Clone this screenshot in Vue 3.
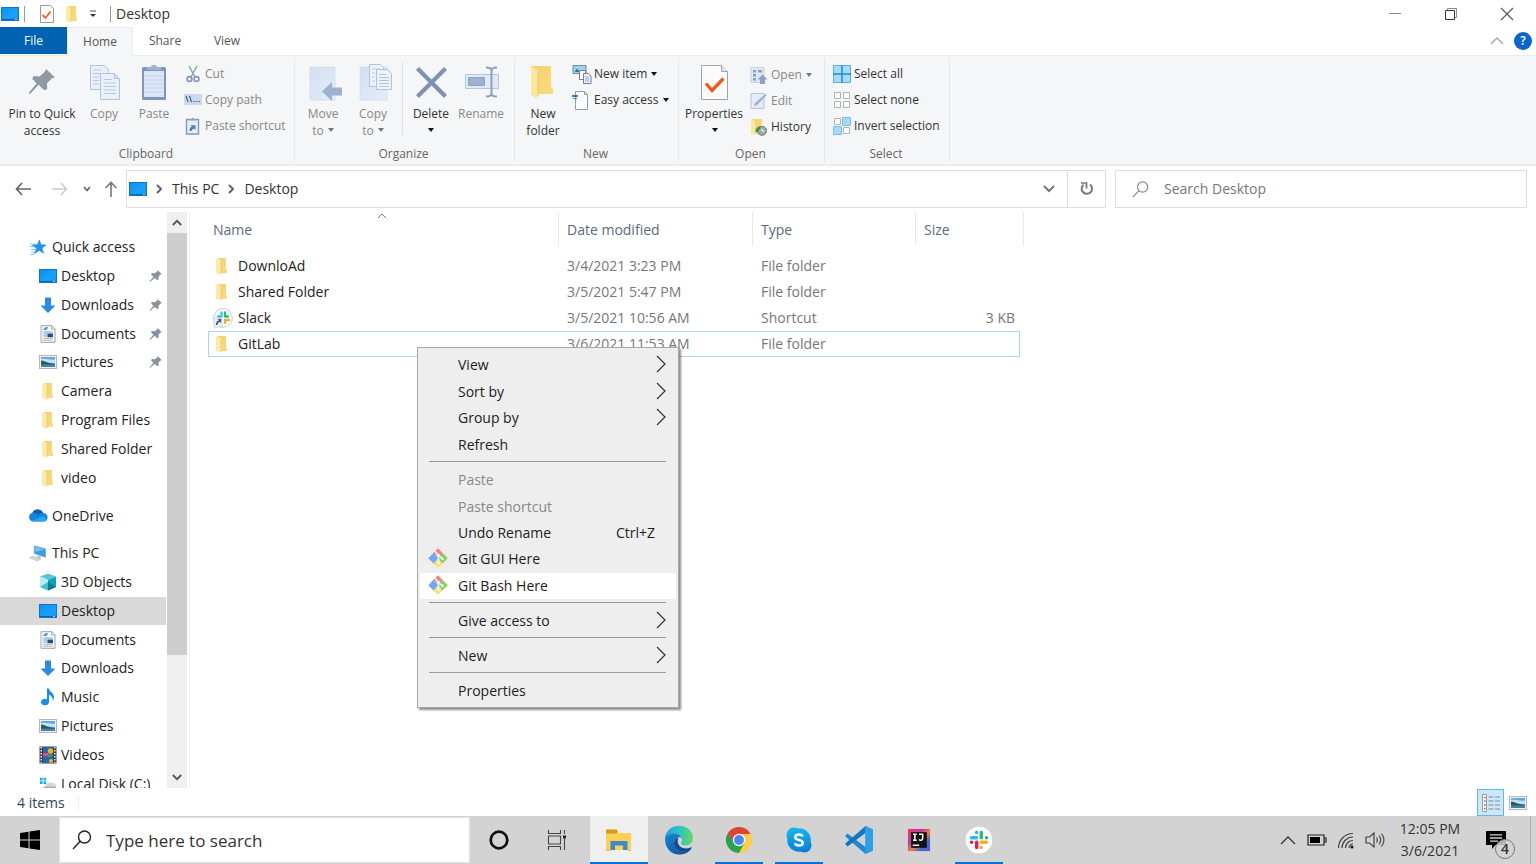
<script setup>
const tabs = ['Home', 'Share', 'View']

const quick = [
  { t: 'Desktop', i: 'desktop', pin: true },
  { t: 'Downloads', i: 'download', pin: true },
  { t: 'Documents', i: 'document', pin: true },
  { t: 'Pictures', i: 'picture', pin: true },
  { t: 'Camera', i: 'folder' },
  { t: 'Program Files', i: 'folder' },
  { t: 'Shared Folder', i: 'folder' },
  { t: 'video', i: 'folder' }
]
const pc = [
  { t: '3D Objects', i: 'cube' },
  { t: 'Desktop', i: 'desktop', on: true },
  { t: 'Documents', i: 'document' },
  { t: 'Downloads', i: 'download' },
  { t: 'Music', i: 'music' },
  { t: 'Pictures', i: 'picture' },
  { t: 'Videos', i: 'video' },
  { t: 'Local Disk (C:)', i: 'disk' }
]
const tree = [
  { root: { t: 'Quick access', i: 'star' }, items: quick },
  { root: { t: 'OneDrive', i: 'cloud' }, items: [] },
  { root: { t: 'This PC', i: 'pc' }, items: pc }
]
const files = [
  { n: 'DownloAd', i: 'folder', d: '3/4/2021 3:23 PM', t: 'File folder', s: '' },
  { n: 'Shared Folder', i: 'folder', d: '3/5/2021 5:47 PM', t: 'File folder', s: '' },
  { n: 'Slack', i: 'slacklink', d: '3/5/2021 10:56 AM', t: 'Shortcut', s: '3 KB' },
  { n: 'GitLab', i: 'folder', d: '3/6/2021 11:53 AM', t: 'File folder', s: '', on: true }
]
const menu = [
  [{ t: 'View', sub: true }, { t: 'Sort by', sub: true }, { t: 'Group by', sub: true }, { t: 'Refresh' }],
  [
    { t: 'Paste', off: true },
    { t: 'Paste shortcut', off: true },
    { t: 'Undo Rename', key: 'Ctrl+Z' },
    { t: 'Git GUI Here', git: true },
    { t: 'Git Bash Here', git: true, on: true }
  ],
  [{ t: 'Give access to', sub: true }],
  [{ t: 'New', sub: true }],
  [{ t: 'Properties' }]
]
const apps = [
  { i: 'explorer', t: 'File Explorer', state: 'active' },
  { i: 'edge', t: 'Microsoft Edge', state: '' },
  { i: 'chrome', t: 'Google Chrome', state: 'running' },
  { i: 'skype', t: 'Skype', state: 'running' },
  { i: 'vscode', t: 'Visual Studio Code', state: '' },
  { i: 'intellij', t: 'IntelliJ IDEA', state: '' },
  { i: 'slackapp', t: 'Slack', state: 'running' }
]
</script>

<template>
  <div class="screen">
    <svg class="sprite" aria-hidden="true">
      <defs>
        <linearGradient id="gBlue" x1="0" y1="0" x2="1" y2="1"><stop offset="0" stop-color="#0a8ff0" /><stop offset=".6" stop-color="#1ba1fb" /><stop offset="1" stop-color="#1693ee" /></linearGradient>
        <linearGradient id="gFold" x1="0" y1="0" x2="1" y2="1"><stop offset="0" stop-color="#f3d06f" /><stop offset="1" stop-color="#fbdc7c" /></linearGradient>
        <linearGradient id="gPale" x1="0" y1="0" x2="1" y2="1"><stop offset="0" stop-color="#d3e0f2" /><stop offset="1" stop-color="#e3ecf8" /></linearGradient>
        <linearGradient id="gEdge1" x1="0" y1="0" x2="1" y2="0"><stop offset="0" stop-color="#1b9de2" /><stop offset=".5" stop-color="#2fc2c9" /><stop offset="1" stop-color="#5fdc5a" /></linearGradient>
        <linearGradient id="gEdge2" x1="0" y1="0" x2="1" y2="1"><stop offset="0" stop-color="#1488d8" /><stop offset="1" stop-color="#0f4a93" /></linearGradient>
        <linearGradient id="gSkype" x1="0" y1="0" x2="0" y2="1"><stop offset="0" stop-color="#12b5f0" /><stop offset="1" stop-color="#0b80d8" /></linearGradient>
        <linearGradient id="gIj" x1="0" y1="0" x2="1" y2="1"><stop offset="0" stop-color="#fe315d" /><stop offset=".35" stop-color="#b4449a" /><stop offset=".55" stop-color="#f97a3c" /><stop offset=".75" stop-color="#3a6bd8" /><stop offset="1" stop-color="#6b57c8" /></linearGradient>
      </defs>
      <symbol id="desktop" viewBox="0 0 18 14"><rect x=".5" y=".5" width="17" height="13" fill="url(#gBlue)" stroke="#0d76c9" /><path d="M1 12.5h16" stroke="#0b66b4" /><path d="M14 12.5h2" stroke="#9fd4fa" /></symbol>
      <symbol id="folder" viewBox="0 0 18 18"><path d="M5 1h8v11l1 1v3H5z" fill="url(#gFold)" /><path d="M3 1.5l5 1.2V17l-1 .8L3 16z" fill="#fde9a9" /><path d="M8 3v14" stroke="#e9c661" stroke-width=".6" /></symbol>
      <symbol id="download" viewBox="0 0 18 18"><path d="M6 1.500h6v8h4.500L9 17 1.500 9.500H6z" fill="#2b8be0" /></symbol>
      <symbol id="document" viewBox="0 0 18 18"><path d="M2 .7h11l3 3v13.600H2z" fill="#f8fafb" stroke="#8e979d" stroke-width=".9" /><path d="M2 .7h1.500v16.600H2z" fill="#d3d8dc" /><path d="M12.500.7v3.500H16" fill="#dfe4e8" stroke="#8e979d" stroke-width=".6" /><path d="M4.500 4.500l2-2h2l-1 2zM4.500 7h9M4.500 9h4M4.500 11h4" fill="#3e97dc" stroke="#4e9bd8" stroke-width=".9" /><path d="M4.500 13.300h9M4.500 15.200h9" stroke="#98a0a6" stroke-width=".8" /><rect x="8.500" y="8.500" width="5.500" height="3.700" fill="#204f7d" /></symbol>
      <symbol id="picture" viewBox="0 0 18 14"><rect x=".5" y=".5" width="17" height="13" fill="#f3f3f3" stroke="#b3b7ba" /><rect x="2" y="2" width="14" height="10" fill="#5fa8e6" /><path d="M2 4c5-1 9 1.500 14 .5V8H2z" fill="#c6e1f7" /><path d="M2 5.500c3 0 6 2.500 14 3.500v1.500H2z" fill="#2d5c4f" /><path d="M2 9.500h14V12H2z" fill="#3c84b8" /></symbol>
      <symbol id="star" viewBox="0 0 18 18"><path d="M10.500 1l1.600 5.200 5.400.2-4.300 3.300 1.500 5.300-4.500-3-4.700 3.400 1.800-5.600L3 6.300l5.400-.2z" fill="#1e95ea" stroke="#1e95ea" stroke-width=".8" /><path d="M1 5.500h5M.5 8h5M2 14h4M1 16.500h4M2 11h4" stroke="#6dbcf3" stroke-width="1" /></symbol>
      <symbol id="cloud" viewBox="0 0 20 14"><path d="M5 13a4.500 4.500 0 0 1-.6-8.800A6 6 0 0 1 15 4.400 4.300 4.300 0 0 1 15.500 13z" fill="#1384dc" /><path d="M4.400 4.200A6 6 0 0 1 15 4.400c-2 0-3.500.9-4.500 2.200C9 5 7 4 4.400 4.200z" fill="#0a5fb4" /><path d="M3.500 12.500l12-5 3.500 4c-.8 1-2 1.500-3.500 1.500H5z" fill="#28a3ee" /></symbol>
      <symbol id="pc" viewBox="0 0 20 18"><path d="M6 1l12 3v9L6 9z" fill="#2f9ff0" stroke="#8ea2b0" stroke-width=".8" /><path d="M7 2l10 2.500-10 3z" fill="#74c4f8" /><path d="M9 11l4 1.500v2L9 13z" fill="#b4bcc2" /><path d="M1 13.500l4-1.500 8 3-4 1.800z" fill="#d4d9dd" stroke="#a6adb2" stroke-width=".6" /></symbol>
      <symbol id="cube" viewBox="0 0 18 18"><path d="M9 .5l8 3L9 7 1 3.500z" fill="#52c9d9" /><path d="M1 3.500L9 7v10.500L1 14z" fill="#b2edf1" /><path d="M17 3.500L9 7v10.500l8-3.500z" fill="#0fa3bb" /><path d="M1 14l8-5v8.500z" fill="#3bc3cf" /><path d="M17 14L9 9v8.500z" fill="#087c96" /></symbol>
      <symbol id="music" viewBox="0 0 18 18"><path d="M8 .5h2c.5 3.500 5 4.500 5 8.500 0 1.500-.5 2.800-1.300 4 .3-3-.7-5-3.700-6.200V14a4 3.300 0 1 1-2-2.800z" fill="#168fe8" /></symbol>
      <symbol id="video" viewBox="0 0 18 18"><rect x=".5" y=".5" width="17" height="17" fill="#3f4246" /><rect x="4" y="1" width="10" height="16" fill="#2a62b9" /><path d="M2.200 1v16M15.800 1v16" stroke="#e5e5e5" stroke-width="1.500" stroke-dasharray="1.500 1.500" /><circle cx="11.500" cy="5" r="2.700" fill="#e9b51c" /><path d="M4 7h5v3H4z" fill="#db4e86" /><path d="M9 8h4v3H9z" fill="#3d9a45" /><circle cx="12" cy="15" r="2" fill="#efb91a" /></symbol>
      <symbol id="disk" viewBox="0 0 18 18"><path d="M0 2h3v3H0zM4 2h3v3H4zM0 6h3v3H0zM4 6h3v3H4z" fill="#1cace8" /><path d="M6 9.500l3-2h6l3 3v3H6z" fill="#d4d7da" /><path d="M4 12h14v4H4z" fill="#a3a8ac" /></symbol>
      <symbol id="pin" viewBox="0 0 14 14"><path d="M8.500 1l4.500 4.300-1.600.3-1.900 2.200.1 2.700-1.400.7-2.500-2.500L1 13l-.5-.6 3.800-4.700L2 5.300l.9-1.200 2.800.2L8.200 2.500z" fill="#87929b" /></symbol>
      <symbol id="slacklink" viewBox="0 0 20 20"><circle cx="10" cy="10" r="9.300" fill="#fff" stroke="#c3c7ca" /><g stroke-width="2.300" stroke-linecap="round"><path d="M8.500 4.500v4M5 8.500h3" stroke="#36c5f0" /><path d="M12 4.500v4M15 8.500h-2" stroke="#2eb67d" /><path d="M12 12h4M12 12v3" stroke="#ecb22e" /></g><path d="M1 10h8v9H1z" fill="#f2f2f2" stroke="#b9bcbe" stroke-width=".6" /><path d="M3 17c0-3 1-4 3-4.500l-1.300-1.400H8.200V15L7 13.800C5.400 14.300 4.500 15 4.500 17z" fill="#1b569b" /></symbol>
      <symbol id="git" viewBox="0 0 20 20"><path d="M5.500 4.800L10 9.300v2L5.500 15.500.3 10.200z" fill="#73a6f8" /><path d="M10 .3l4.700 4.600L11 8.500 5.300 5z" fill="#f77f7f" /><path d="M14.700 4.900l5 5.300-5.200 5.300L10 11V8.500z" fill="#86d05c" /><path d="M10 10l4.500 5.500L10 19.800l-4.500-4.300z" fill="#fbdc74" /><path d="M6.500 3l4 4v8M10.800 7.500l3.600 3.200" stroke="#f3f3f3" stroke-width="1.500" fill="none" /><circle cx="10.500" cy="7.300" r="1.500" fill="#f3f3f3" /><circle cx="10.500" cy="14.800" r="1.500" fill="#f3f3f3" /><circle cx="14.400" cy="10.700" r="1.500" fill="#f3f3f3" /></symbol>

      <symbol id="bigpin" viewBox="0 0 40 40"><path d="M24 7l9 8.500-3 .8-5 5 .2 5.700-3 1.200-5.500-5.400L8 32l-1.300-1.200 8-9.300-4.500-4.800 1.500-2.700 5.800.4 5-4.400z" fill="#8f9aa3" /></symbol>
      <symbol id="copy" viewBox="0 0 40 40"><g fill="#e9f0fa" stroke="#b3c3dc"><path d="M6.500 3.500h14l4 4.500v19.500h-18z" /><path d="M16.500 11.500h14l5 5v21h-19z" /><path d="M30.500 11.500v5h5" fill="#d3dfef" /></g><path d="M9 8h9M9 11.500h12M9 15h6M9 18.500h6M9 22h6M20 17.500h8M20 21h12M20 24.500h12M20 28h12M20 31.500h12" stroke="#b9c8de" stroke-width="1.200" /></symbol>
      <symbol id="paste" viewBox="0 0 40 40"><rect x="8" y="5" width="24" height="33" rx="1.500" fill="#8095ba" /><path d="M10 9h20v26H10z" fill="#dbe6f5" /><path d="M13 8V5h4c0-3 6-3 6 0h4v3z" fill="#a5b4cc" /><path d="M10 14h20M10 18h20M10 22h20M10 26h20M10 30h20" stroke="#c5d5ec" /></symbol>
      <symbol id="cut" viewBox="0 0 18 18"><path d="M5 1l6 11M13 1L7 12" stroke="#93a0b4" stroke-width="1.500" /><circle cx="5.500" cy="14" r="2.400" fill="none" stroke="#8797b4" stroke-width="1.700" /><circle cx="12.500" cy="14" r="2.400" fill="none" stroke="#8797b4" stroke-width="1.700" /></symbol>
      <symbol id="path" viewBox="0 0 18 18"><rect y="3" width="18" height="11" fill="#ccd9ed" /><path d="M2 5l2 6M5.500 5l2 6" stroke="#45536d" stroke-width="1.100" /><path d="M9 10.500h7.500" stroke="#56637a" stroke-dasharray="1.500 1.200" stroke-width="1.200" /></symbol>
      <symbol id="shortcut" viewBox="0 0 18 18"><path d="M2.500 2.500h12v14.500h-12z" fill="#e6eefa" stroke="#8297bb" stroke-width="1.400" /><path d="M5.500 3.500V2h2c0-1.700 2.500-1.700 2.500 0h2v1.500z" fill="#93a4c2" /><path d="M5.500 14c0-3 .9-3.900 2.200-4.300L6.500 8.300h5v4.600l-1.200-1.200c-1.700.3-2.500 1-2.500 2.300z" fill="#6079a8" /></symbol>
      <symbol id="moveto" viewBox="0 0 40 40"><path d="M7 5h25v33H7z" fill="url(#gPale)" stroke="#c9d8ec" stroke-width=".6" /><path d="M19 29.500l10-9.500v5.500h10v8H29V39z" fill="#9fb1ce" /></symbol>
      <symbol id="copyto" viewBox="0 0 40 40"><path d="M7 5h27v33H7z" fill="url(#gPale)" stroke="#c9d8ec" stroke-width=".6" /><g fill="#ecf2fa" stroke="#b0c1da"><path d="M16.500 2.500h11l3 3v19h-14z" /><path d="M23.500 7.500h11l4 4v16h-15z" /></g><path d="M26 12.500h7M26 15.500h10M26 18.500h10M26 21.500h10M26 24.500h10M19 7h7M19 11h3M19 15h3M19 19h3" stroke="#b6c5dc" stroke-width="1.100" /></symbol>
      <symbol id="delete" viewBox="0 0 40 40"><path d="M6.500 6.500l28 28M34.500 6.500l-28 28" stroke="#7f91b2" stroke-width="4.200" /></symbol>
      <symbol id="rename" viewBox="0 0 40 40"><path d="M4.500 12.500h33v14h-33z" fill="#e0eaf7" stroke="#b6c6de" /><path d="M7.500 15.500h16v8h-16z" fill="#9fb1ce" stroke="#8ea2c3" /><path d="M25 5.500c4 0 5.500 1 5.500 3 0-2 1.500-3 5.500-3M30.500 8v24M25 34.500c4 0 5.500-1 5.500-3 0 2 1.500 3 5.500 3" stroke="#8b9fc1" stroke-width="2" fill="none" /></symbol>
      <symbol id="bigfolder" viewBox="0 0 40 40"><path d="M8 4h20v21l2 2v5H8z" fill="url(#gFold)" /><path d="M8 4.500l7 4V34l-2 2.500-5-4z" fill="#fde7a0" /><path d="M15 9v25" stroke="#eac55c" stroke-width=".8" /></symbol>
      <symbol id="newitem" viewBox="0 0 20 20"><path d="M1 1.500h13v8H1z" fill="#9ad3f3" stroke="#5f7480" stroke-width=".8" /><path d="M3 8c1-4 3-4 4 0z" fill="#2b6e78" /><path d="M7.500 6.500h6v9h-6z" fill="#fff" stroke="#75828c" /><path d="M11.500 9.500h5l2.500 2.500v7.500h-7.500z" fill="#eef1fb" stroke="#75828c" /><path d="M13 13h4M13 15h4M13 17h4" stroke="#8fa7e0" /></symbol>
      <symbol id="easy" viewBox="0 0 20 20"><path d="M3.500 1.500h9l3 3v15h-12z" fill="#fafafa" stroke="#989c9f" /><path d="M12.500 1.500v3h3" fill="none" stroke="#989c9f" /><path d="M0 6h6" stroke="#1f5fa9" stroke-width="1.600" /><path d="M1 8.500h4" stroke="#4a86c8" /></symbol>
      <symbol id="props" viewBox="0 0 40 40"><path d="M7.500 3.500h20l6 6v28h-26z" fill="#fbfbfb" stroke="#a0a3a5" /><path d="M27.500 3.500v6h6" fill="#e5e7e8" stroke="#a0a3a5" /><path d="M12 21.500l6 7 11.500-12" stroke="#f25a1d" stroke-width="3.300" fill="none" /></symbol>
      <symbol id="open" viewBox="0 0 18 18"><path d="M1 1.500h13v15H1z" fill="#dde7f5" stroke="#bccbe1" stroke-width=".8" /><path d="M3 4h3v2.500H3zM3 8h3v2.500H3zM3 12h3v2.500H3zM8 4h4v2.500H8z" fill="#8b9fc1" /><path d="M12.500 8.500L17.500 13.500H15V18h-5v-4.500H7.500z" fill="#8da1c4" /></symbol>
      <symbol id="edit" viewBox="0 0 18 18"><path d="M1 1.500h13v15H1z" fill="#e4ecf8" stroke="#b4c4dd" /><path d="M4 14l1-3L15.500 2l1.200 1.200L7 13z" fill="#9db0d0" /></symbol>
      <symbol id="history" viewBox="0 0 18 18"><path d="M1 1h11v15H1z" fill="url(#gFold)" /><path d="M1 1l4 2v14.500L1 15z" fill="#fde7a0" /><circle cx="12" cy="12.800" r="4.500" fill="#a2a7aa" stroke="#72787b" /><path d="M12 10.500v2.500h2.500" stroke="#fff" fill="none" /><path d="M5.500 14c0-3.500 2-5.500 5-5.500v2.500c-1.500 0-2.300 1-2.300 3z" fill="#2a9b35" /></symbol>
      <symbol id="selall" viewBox="0 0 18 18"><path d="M.5.500h17v17H.5z" fill="#a5dafc" stroke="#5dade0" /><path d="M9 0v18M0 9h18" stroke="#1f87cd" stroke-width="1.400" /></symbol>
      <symbol id="selnone" viewBox="0 0 18 18"><path d="M1.500 1.500h6v6h-6zM10.500 1.500h6v6h-6zM1.500 10.500h6v6h-6zM10.500 10.500h6v6h-6z" fill="#fdfdfd" stroke="#b0b2b4" /></symbol>
      <symbol id="selinv" viewBox="0 0 18 18"><path d="M1.500 1.500h6v6h-6zM10.500 10.500h6v6h-6z" fill="#fdfdfd" stroke="#b0b2b4" /><path d="M9.500.500h8v8h-8zM.5 9.500h8v8h-8z" fill="#a5dafc" stroke="#78bdec" /></symbol>
      <symbol id="check" viewBox="0 0 16 18"><path d="M1.500.5h10l3 3v14h-13z" fill="#fbfbfb" stroke="#96999b" /><path d="M3.500 10l3 3 5-6.500" fill="none" stroke="#f0602a" stroke-width="1.800" /></symbol>
      <symbol id="lens" viewBox="0 0 20 20"><circle cx="12.500" cy="7" r="6" fill="none" stroke="currentColor" stroke-width="1.400" /><path d="M8.200 11.300L1 19" stroke="currentColor" stroke-width="1.400" /></symbol>

      <symbol id="explorer" viewBox="0 0 28 28"><path d="M1 4.500h10l2 2.500h13v17H1z" fill="#fbd154" /><path d="M1 3.500h10.500l1.500 2-1.500 2H1z" fill="#d99a12" /><path d="M5.500 15h17v9H18v-4.500h-8V24H5.500z" fill="#3a8bd0" /><path d="M1 24h4.500v1H1zM22.500 24H26v1h-3.500z" fill="#f0bd3c" /></symbol>
      <symbol id="edge" viewBox="0 0 30 30"><path d="M1 13C2 5.500 8 .8 15 .8c8 0 14 5.400 14 12 0 4.500-3.300 7.700-7.500 7.700-3 0-4.500-1.200-4.500-2.300 0-.8 1-1.400 1-3.200 0-3.500-3.500-6-7.500-6C6 9 2.500 11 1 13z" fill="url(#gEdge1)" /><path d="M1 13c1.500-2.500 5-4.300 9-4.300 3.500 0 6.500 1.600 7.500 4-3.500-1.500-7.500 1-7.500 5.500 0 4.800 4 8.300 9.500 8.300 3 0 5.500-1 7.300-2C24.500 27.500 20 29.500 15 29.500 7 29.500.5 23 1 13z" fill="url(#gEdge2)" /><path d="M10 18.200c0-3 1.500-5 4.500-5.800-1.500 3-1 7 2 9.300 2.800 2.200 7.500 2.300 11.500.3-.5 1-.8 1.800-1.200 2.500-6.800 5-16.800 1.500-16.800-6.300z" fill="#114a8f" /></symbol>
      <symbol id="chrome" viewBox="0 0 28 28"><circle cx="14" cy="14" r="13" fill="#ffcd40" /><path d="M14 14L2.700 7.500A13 13 0 0 0 14 27l5.500-10z" fill="#2ba24c" /><path d="M2.700 7.500A13 13 0 0 1 25.500 8H14l-5.500 8z" fill="#dc4437" /><circle cx="14" cy="14" r="6.200" fill="#f5f5f5" /><circle cx="14" cy="14" r="4.900" fill="#4a86f5" /></symbol>
      <symbol id="skype" viewBox="0 0 28 28"><circle cx="9" cy="9" r="7.500" fill="#18b0ea" /><circle cx="19.500" cy="19.500" r="7" fill="#0b80d8" /><circle cx="14" cy="14" r="11.800" fill="url(#gSkype)" /><path d="M17.800 10.400c-.8-1.300-2.200-1.900-3.900-1.900-2 0-3.700 1-3.700 2.800 0 3.700 7.600 1.600 7.600 5.400 0 1.800-1.700 2.800-3.800 2.800-2 0-3.500-.7-4.200-2.200" fill="none" stroke="#fff" stroke-width="2.500" /></symbol>
      <symbol id="vscode" viewBox="0 0 30 30"><path d="M21.500 1L29 4.500v21L21.500 29 1 11.200 3.500 8.500l18 13.500z" fill="#1e8ad2" /><path d="M21.500 1L1 18.800l2.500 2.700 18-13.500z" fill="#1576bd" /><path d="M21.500 1L29 4.500v21L21.500 29z" fill="#2aa0ea" /></symbol>
      <symbol id="intellij" viewBox="0 0 26 26"><path d="M1 1h24v24H1z" fill="url(#gIj)" /><path d="M4.500 4.500h17v17h-17z" fill="#121212" /><path d="M6.500 6.700h4M8.500 6.700v6.600M6.500 13.300h4M13 6.700h4v4.800c0 2-2.600 2.200-4 1" fill="none" stroke="#fff" stroke-width="1.600" /><path d="M6.200 18.700h7" stroke="#fff" stroke-width="1.500" /></symbol>
      <symbol id="slackapp" viewBox="0 0 28 28"><circle cx="14" cy="14" r="13.300" fill="#fff" /><g stroke-width="3.500" stroke-linecap="round"><path d="M11.700 6.300v.1M6.500 11.700h5.200" stroke="#2ebde8" /><path d="M16.300 6.500v5.200M21.500 11.700h.1" stroke="#2eb67d" /><path d="M16.300 16.300h5.200M16.300 21.500v.1" stroke="#ecb22e" /><path d="M11.700 16.300v5.200M6.500 16.300h.1" stroke="#e01e5a" /></g></symbol>
    </svg>

    <header class="titlebar">
      <svg class="desk"><use href="#desktop" /></svg>
      <span class="bar first"></span>
      <button class="qa" aria-label="Properties"><svg class="chk"><use href="#check" /></svg></button>
      <button class="qa" aria-label="New folder"><svg class="ic18"><use href="#folder" /></svg></button>
      <button class="custom" aria-label="Customize toolbar"><svg viewBox="0 0 8 8" width="8" height="8"><path d="M1 1h6" stroke="#555" /><path d="M1 4h6L4 7z" fill="#333" /></svg></button>
      <span class="bar"></span>
      <h1>Desktop</h1>
      <div class="winctl">
        <button aria-label="Minimize"><svg viewBox="0 0 14 14" width="14" height="14"><path d="M1 6.500h12" stroke="#888" /></svg></button>
        <button aria-label="Restore"><svg viewBox="0 0 14 14" width="14" height="14"><path d="M3.500 3V1.500h9v9H10.500" fill="none" stroke="#888" /><path d="M1.500 3.500h9v9h-9z" fill="none" stroke="#333" /></svg></button>
        <button aria-label="Close"><svg viewBox="0 0 14 14" width="14" height="14"><path d="M1 1l12 12M13 1L1 13" stroke="#555" stroke-width="1.100" /></svg></button>
      </div>
    </header>

    <nav class="tabs">
      <button class="file">File</button>
      <button v-for="(t, k) in tabs" :key="t" :class="{ current: k === 0 }">{{ t }}</button>
      <div class="help">
        <button aria-label="Collapse ribbon"><svg viewBox="0 0 14 10" width="14" height="10"><path d="M1 8l6-6 6 6" fill="none" stroke="#aaa" stroke-width="1.500" /></svg></button>
        <button class="q" aria-label="Help">?</button>
      </div>
    </nav>

    <section class="ribbon">
      <div class="group clipboard">
        <div class="tools">
          <button class="big wide"><svg><use href="#bigpin" /></svg><span>Pin to Quick access</span></button>
          <button class="big off"><svg><use href="#copy" /></svg><span>Copy</span></button>
          <button class="big off"><svg><use href="#paste" /></svg><span>Paste</span></button>
          <div class="stack">
            <button class="off"><svg><use href="#cut" /></svg>Cut</button>
            <button class="off"><svg><use href="#path" /></svg>Copy path</button>
            <button class="off"><svg><use href="#shortcut" /></svg>Paste shortcut</button>
          </div>
        </div>
        <h2>Clipboard</h2>
      </div>
      <div class="group organize">
        <div class="tools">
          <button class="big off"><svg><use href="#moveto" /></svg><span>Move<br />to <i class="tri"></i></span></button>
          <button class="big off"><svg><use href="#copyto" /></svg><span>Copy<br />to <i class="tri"></i></span></button>
          <span class="rule"></span>
          <button class="big"><svg><use href="#delete" /></svg><span>Delete<br /><i class="tri"></i></span></button>
          <button class="big off"><svg><use href="#rename" /></svg><span>Rename</span></button>
        </div>
        <h2>Organize</h2>
      </div>
      <div class="group new">
        <div class="tools">
          <button class="big"><svg><use href="#bigfolder" /></svg><span>New folder</span></button>
          <div class="stack">
            <button><svg><use href="#newitem" /></svg>New item<i class="tri"></i></button>
            <button><svg><use href="#easy" /></svg>Easy access<i class="tri"></i></button>
          </div>
        </div>
        <h2>New</h2>
      </div>
      <div class="group opens">
        <div class="tools">
          <button class="big mid"><svg><use href="#props" /></svg><span>Properties<br /><i class="tri"></i></span></button>
          <div class="stack">
            <button class="off"><svg><use href="#open" /></svg>Open<i class="tri"></i></button>
            <button class="off"><svg><use href="#edit" /></svg>Edit</button>
            <button><svg><use href="#history" /></svg>History</button>
          </div>
        </div>
        <h2>Open</h2>
      </div>
      <div class="group select">
        <div class="tools">
          <div class="stack">
            <button><svg><use href="#selall" /></svg>Select all</button>
            <button><svg><use href="#selnone" /></svg>Select none</button>
            <button><svg><use href="#selinv" /></svg>Invert selection</button>
          </div>
        </div>
        <h2>Select</h2>
      </div>
    </section>

    <div class="navbar">
      <div class="arrows">
        <button class="a1" aria-label="Back"><svg viewBox="0 0 16 14" width="16" height="14"><path d="M7 1L1.500 7 7 13M1.500 7H16" fill="none" stroke="#666" stroke-width="1.700" /></svg></button>
        <button class="a2" aria-label="Forward"><svg viewBox="0 0 16 14" width="16" height="14"><path d="M9 1l5.500 6L9 13M14.500 7H0" fill="none" stroke="#ccc" stroke-width="1.500" /></svg></button>
        <button class="a3" aria-label="Recent locations"><svg viewBox="0 0 8 6" width="8" height="6"><path d="M1 1l3 3.500L7 1" fill="none" stroke="#666" stroke-width="1.600" /></svg></button>
        <button class="a4" aria-label="Up"><svg viewBox="0 0 14 16" width="14" height="16"><path d="M1.500 7L7 1.500 12.500 7M7 1.500V16" fill="none" stroke="#777" stroke-width="1.600" /></svg></button>
      </div>
      <div class="address">
        <svg class="desk"><use href="#desktop" /></svg>
        <svg class="crumb" viewBox="0 0 6 10"><path d="M1 1l4 4-4 4" /></svg>
        <a href="#pc">This PC</a>
        <svg class="crumb" viewBox="0 0 6 10"><path d="M1 1l4 4-4 4" /></svg>
        <a href="#desktop-folder">Desktop</a>
        <button class="drop" aria-label="Previous locations"><svg viewBox="0 0 12 8" width="12" height="8"><path d="M1 1l5 5 5-5" fill="none" stroke="#777" stroke-width="2" /></svg></button>
        <button class="reload" aria-label="Refresh"><svg viewBox="0 0 16 16" width="16" height="16"><path d="M11 3.500a5.200 5.200 0 1 1-6.500.2" fill="none" stroke="#777" stroke-width="2" /><path d="M2 2h5.500v5.500" fill="none" stroke="#777" stroke-width="1.700" /></svg></button>
      </div>
      <label class="find">
        <svg><use href="#lens" /></svg>
        <input type="search" placeholder="Search Desktop" aria-label="Search Desktop" />
      </label>
    </div>

    <main>
      <nav class="tree" aria-label="Folders">
        <ul v-for="g in tree" :key="g.root.t" :class="{ full: g.items.length }">
          <li><a class="root" href="#"><svg><use :href="'#' + g.root.i" /></svg>{{ g.root.t }}</a></li>
          <li v-for="n in g.items" :key="n.t" :class="{ on: n.on }">
            <a href="#"><svg :class="n.i"><use :href="'#' + n.i" /></svg>{{ n.t }}<svg v-if="n.pin" class="pin"><use href="#pin" /></svg></a>
          </li>
        </ul>
      </nav>
      <div class="scroll">
        <button aria-label="Scroll up"><svg viewBox="0 0 12 8" width="10" height="7"><path d="M1 7l5-5 5 5" fill="none" stroke="#555" stroke-width="2.200" /></svg></button>
        <div class="track"><div class="thumb"></div></div>
        <button aria-label="Scroll down"><svg viewBox="0 0 12 8" width="10" height="7"><path d="M1 1l5 5 5-5" fill="none" stroke="#555" stroke-width="2.200" /></svg></button>
      </div>
      <div class="pane">
        <table>
          <colgroup><col class="c1" /><col class="c2" /><col class="c3" /><col class="c4" /></colgroup>
          <thead>
            <tr>
              <th><svg class="sort" viewBox="0 0 10 6"><path d="M1 5l4-4 4 4" fill="none" stroke="#777" /></svg>Name</th>
              <th>Date modified</th><th>Type</th><th>Size</th>
            </tr>
          </thead>
          <tbody>
            <tr v-for="f in files" :key="f.n" :class="{ on: f.on }">
              <td><span class="name"><svg :class="f.i"><use :href="'#' + f.i" /></svg>{{ f.n }}</span></td>
              <td>{{ f.d }}</td><td>{{ f.t }}</td><td>{{ f.s }}</td>
            </tr>
          </tbody>
        </table>
        <div class="menu" role="menu">
          <div v-for="(g, k) in menu" :key="k" class="mg" :class="'n' + g.length">
            <button v-for="m in g" :key="m.t" role="menuitem" :class="{ on: m.on, off: m.off }">
              <svg v-if="m.git" class="git"><use href="#git" /></svg>
              <span>{{ m.t }}</span>
              <kbd v-if="m.key">{{ m.key }}</kbd>
              <svg v-if="m.sub" class="sub" viewBox="0 0 10 18"><path d="M1 1l8 8-8 8" fill="none" stroke="#333" stroke-width="1.200" /></svg>
            </button>
          </div>
        </div>
      </div>
    </main>

    <footer class="status">
      <span>4 items</span><i></i>
      <div class="views">
        <button class="sel" aria-label="Details view"><svg viewBox="0 0 18 18" width="18" height="18"><path d="M.5.500h4v17h-4z" fill="#fff" stroke="#9a9a9a" /><path d="M2 3.500h1.500M2 11h1.500" stroke="#d34a3a" stroke-width="1.500" /><path d="M2 7h1.500M2 14.500h1.500" stroke="#3a7fb5" stroke-width="1.500" /><path d="M6.500 3h5M13 3h5M6.500 7h5M13 7h5M6.500 11h5M13 11h5M6.500 15h5M13 15h5" stroke="#7b8b94" /></svg></button>
        <button aria-label="Large icons view"><svg class="pic"><use href="#picture" /></svg></button>
      </div>
    </footer>

    <div class="taskbar">
      <button class="start" aria-label="Start"><svg viewBox="0 0 20 20" width="20" height="20"><path d="M0 3l8.500-1.200v7.700H0zM9.500 1.600L20 0v9.500H9.500zM0 10.500h8.500v7.700L0 17zM9.500 10.500H20V20L9.500 18.400z" fill="#000" /></svg></button>
      <label class="tsearch"><svg><use href="#lens" /></svg><input type="text" placeholder="Type here to search" aria-label="Type here to search" /></label>
      <button class="cell" aria-label="Cortana"><svg viewBox="0 0 22 22" width="22" height="22"><circle cx="11" cy="11" r="8.300" fill="none" stroke="#111" stroke-width="2.700" /></svg></button>
      <button class="cell" aria-label="Task view"><svg viewBox="0 0 20 20" width="20" height="20"><path d="M1.500 0v3.500h12V0M1.500 20v-3.500h12V20M1.500 6h12v8h-12zM17.500 0v4M17.500 9v11" fill="none" stroke="#444" stroke-width="1.100" /><path d="M16 5.500h3v3h-3z" fill="#222" /></svg></button>
      <div class="apps">
        <button v-for="a in apps" :key="a.i" :class="['cell', a.state]" :aria-label="a.t"><svg :class="'app-' + a.i"><use :href="'#' + a.i" /></svg></button>
      </div>
      <div class="tray">
        <button aria-label="Hidden icons"><svg viewBox="0 0 16 10" width="16" height="10"><path d="M1 9l7-7 7 7" fill="none" stroke="#333" stroke-width="1.300" /></svg></button>
        <button aria-label="Battery"><svg viewBox="0 0 20 12" width="20" height="12"><path d="M1 1h16v10H1zM17 4h2v4h-2" fill="none" stroke="#222" stroke-width="1.200" /><path d="M3 3h10v6H3z" fill="#000" /></svg></button>
        <button aria-label="Network"><svg viewBox="0 0 18 18" width="18" height="18"><path d="M1.500 17C1.500 9 8 2.500 16 2.500M5 17C5 11 10 6 16 6M8.500 17c0-4 3.300-7.500 7.500-7.500M12 17c0-2 1.800-4 4-4" fill="none" stroke="#444" stroke-width="1.200" /><circle cx="15" cy="16" r="1.500" fill="#111" /></svg></button>
        <button aria-label="Volume"><svg viewBox="0 0 20 18" width="20" height="18"><path d="M1 6h3.500L9 2v14l-4.500-4H1zM11.500 6.500c1 1.500 1 3.500 0 5M14 4.500c2 2.700 2 6.300 0 9M16.500 2.500c3 4 3 9 0 13" fill="none" stroke="#444" stroke-width="1.200" /></svg></button>
        <div class="clock"><span>12:05 PM</span><span>3/6/2021</span></div>
        <button class="notes" aria-label="4 notifications"><svg viewBox="0 0 20 20" width="20" height="20"><path d="M0 1h20v14H9.500L6 19v-4H0z" fill="#000" /><path d="M4 4.800h12M4 8h12M4 11.200h8" stroke="#d3d3d3" stroke-width="1.300" /></svg><b>4</b></button>
      </div>
      <span class="peek"></span>
    </div>
  </div>
</template>

<style>
html, body { background: #fff; }
</style>

<style scoped>
* { box-sizing: border-box; }
.screen {
  height: 100vh; display: flex; flex-direction: column; overflow: hidden;
  font-family: "Open Sans", "Noto Sans", sans-serif; font-size: 14px; line-height: 20px; color: #333; background: #fff;
}
button { font: inherit; color: inherit; background: none; border: 0; padding: 0; margin: 0; display: flex; align-items: center; justify-content: center; }
a { color: inherit; text-decoration: none; }
input { font: inherit; border: 0; padding: 0; outline: 0; background: transparent; min-width: 0; flex: 1; }
ul { list-style: none; margin: 0; padding: 0; }
svg { flex: none; display: block; }
.sprite { position: absolute; width: 0; height: 0; }
.desk { width: 18px; height: 14px; }
.ic18 { width: 18px; height: 18px; }

.titlebar { height: 27px; flex: none; display: flex; align-items: center; padding-left: 1px; }
.bar { width: 1px; height: 16px; background: #999; margin: 0 5px; }
.bar.first { margin-right: 14px; }
.qa { width: 16px; margin-right: 9px; }
.chk { width: 16px; height: 18px; }
.custom { margin-right: 8px; }
h1 { margin: 0; font-size: 14px; font-weight: 400; }
.winctl { display: flex; margin-left: auto; padding-right: 1px; }
.winctl button { width: 56px; height: 27px; }

.tabs { height: 28px; flex: none; display: flex; align-items: flex-start; font-size: 12px; }
.tabs > button { height: 28px; width: 62px; color: #555; }
.tabs > .file { width: 67px; height: 27px; background: #0063b1; color: #fff; }
.tabs > .current { width: 66px; height: 29px; margin-right: 1px; background: #f5f6f7; border: 1px solid #e8eaec; border-bottom: 0; position: relative; }
.help { margin-left: auto; height: 28px; display: flex; align-items: center; gap: 10px; padding-right: 4px; }
.q { width: 18px; height: 18px; border-radius: 50%; background: #0a66c8; color: #fff; font-weight: 600; line-height: 18px; }

.ribbon { flex: none; display: flex; background: #f5f6f7; border-top: 1px solid #e8eaec; border-bottom: 2px solid #ebecee; height: 111px; font-size: 12px; }
.group { display: flex; flex-direction: column; border-right: 1px solid #e6e8ea; margin: 2px 0; }
.group h2 { margin: 0; padding-right: 2px; font-size: 12px; line-height: 16px; font-weight: 400; text-align: center; color: #666; }
.tools { display: flex; flex: 1; padding-top: 3px; }
.big { flex-direction: column; justify-content: flex-start; line-height: 17px; gap: 3px; color: #333; height: 80px; width: 50px; margin-top: 1px; }
.big svg { width: 40px; height: 40px; }
.big span { display: block; text-align: center; }
.wide { width: 74px; } .mid { width: 60px; }
.off { color: #888; }
.stack { display: flex; flex-direction: column; align-items: flex-start; }
.stack button { height: 26px; gap: 3px; white-space: nowrap; justify-content: flex-start; }
.stack svg { width: 18px; height: 18px; }
.tri { display: inline-block; border: 3px solid transparent; border-top: 4px solid currentColor; border-bottom: 0; vertical-align: 3px; color: #111; margin-left: 1px; }
.off .tri { color: #777; }
.clipboard { width: 295px; } .clipboard .tools { padding-left: 5px; } .clipboard .stack { margin-left: 5px; }
.organize { width: 220px; } .organize .tools { padding-left: 3px; }
.rule { width: 1px; height: 73px; background: #dfe1e4; margin: 1px 3px 0 4px; }
.new { width: 164px; } .new .tools { padding-left: 3px; } .new .stack { margin-left: 4px; }
.new .stack svg { width: 20px; height: 20px; margin-right: -1px; }
.opens { width: 146px; } .opens .tools { padding-left: 5px; } .opens .stack { margin-left: 6px; padding-top: 1px; }
.select { width: 125px; } .select .tools { padding-left: 8px; }

.navbar { height: 46px; flex: none; display: flex; align-items: center; padding-right: 9px; }
.arrows { display: flex; width: 126px; align-items: center; padding-left: 15px; }
.a2 { margin-left: 21px; } .a3 { margin-left: 15px; } .a4 { margin-left: 13px; }
.address { flex: 1; height: 38px; border: 1px solid #dedede; display: flex; align-items: center; padding-left: 2px; }
.address a { margin-right: 9px; }
.crumb { width: 6px; height: 10px; margin: 0 10px 0 9px; }
a + .crumb { margin-left: 0; }
.crumb path { fill: none; stroke: #666; stroke-width: 2; }
.drop { margin-left: auto; width: 36px; height: 36px; }
.reload { width: 38px; height: 36px; border-left: 1px solid #dedede; }
.find { width: 412px; height: 38px; margin-left: 9px; border: 1px solid #dedede; display: flex; align-items: center; padding-left: 16px; gap: 15px; color: #888; }
.find svg { width: 17px; height: 17px; }
input::placeholder { color: #777; opacity: 1; }

main { flex: 1; min-height: 0; display: flex; }
.tree { width: 167px; overflow: hidden; padding-top: 21px; display: flex; flex-direction: column; gap: 9px; }
.tree ul { flex: none; height: 29px; display: grid; grid-auto-rows: 1fr; }
.tree ul.full { height: 259px; }
.tree a { display: flex; align-items: center; height: 100%; padding-left: 39px; gap: 4px; white-space: nowrap; color: #222; }
.tree a.root { padding-left: 28px; }
.tree a svg { width: 18px; height: 16px; }
.tree a svg.folder, .tree a svg.document, .tree a svg.video, .tree a svg.cube, .tree a svg.download, .tree a svg.music { height: 18px; }
.tree a.root svg { width: 20px; height: 17px; }
.tree a .pin { width: 14px; height: 14px; margin-left: auto; margin-right: 4px; }
.on { background: #d9d9d9; }
.tree li.on { margin-right: 1px; }
.scroll { width: 20px; display: flex; flex-direction: column; background: #f0f0f0; }
.scroll button { height: 21px; }
.track { flex: 1; }
.thumb { height: 79%; background: #cdcdcd; }
.pane { flex: 1; position: relative; border-left: 1px solid #f0f0f0; margin-left: 2px; padding-left: 18px; }
table { table-layout: fixed; border-collapse: separate; border-spacing: 0; width: 812px; }
.c1 { width: 351px; } .c2 { width: 194px; } .c3 { width: 163px; } .c4 { width: 104px; }
th { height: 41px; padding: 0 0 5px 8px; text-align: left; font-weight: 400; color: #5a6a80; position: relative; }
th:first-child { padding-left: 5px; }
th::after { content: ""; position: absolute; right: 0; top: 0; width: 1px; height: 34px; background: #e8e8e8; }
th:last-child::after { right: -4px; }
.sort { position: absolute; left: 169px; top: 1px; width: 10px; height: 6px; }
td { height: 26px; padding: 0 0 0 8px; color: #777; border: solid transparent; border-width: 1px 0; white-space: nowrap; }
td:first-child { color: #222; padding-left: 5px; }
td:last-child { text-align: right; padding-right: 5px; }
tbody .on { background: none; }
.on td { border-color: #a9d3f5; }
.on td:first-child { border-left: 1px solid #a9d3f5; padding-left: 4px; }
.on td:last-child { border-right: 1px solid #a9d3f5; padding-right: 4px; }
.name { display: flex; align-items: center; gap: 7px; }
.name svg { width: 18px; height: 18px; }
.name svg.slacklink { width: 20px; height: 20px; margin-right: -2px; }

.menu { position: absolute; left: 227px; top: 135px; width: 262px; background: #eee; border: 1px solid #a8a8a8; box-shadow: 2px 2px 2px rgba(0, 0, 0, .45); padding: 4px 2px 3px; }
.mg { display: grid; grid-auto-rows: 1fr; position: relative; height: 26px; }
.mg.n4 { height: 106px; } .mg.n5 { height: 132px; }
.mg + .mg { margin-top: 9px; }
.mg + .mg::before { content: ""; position: absolute; left: 9px; right: 10px; top: -6px; height: 1px; background: #999; }
.mg button { justify-content: flex-start; position: relative; padding: 0 10px 0 38px; color: #222; }
.mg button.off { color: #888; }
.mg button.on { background: #fff; }
.git { position: absolute; left: 8px; width: 20px; height: 20px; top: 2px; }
kbd { font: inherit; margin-left: auto; margin-right: 11px; }
.sub { width: 10px; height: 18px; margin: 0 0 2px auto; }

.status { height: 28px; flex: none; display: flex; align-items: center; padding-left: 17px; padding-top: 1px; color: #345; }
.status i { width: 1px; height: 14px; background: #eee; margin-left: 13px; }
.views { margin-left: auto; display: flex; height: 27px; }
.views button { width: 32px; }
.views .sel { width: 27px; background: #cce8f8; border: 1px solid #66b5e3; }
.pic { width: 18px; height: 14px; margin-right: 4px; }

.taskbar { height: 48px; flex: none; display: flex; background: #d3d3d3; }
.start { width: 59px; }
.tsearch { width: 411px; margin: 1px 0 1px 0; background: #fff; border: 1px solid #e3e3e3; display: flex; align-items: center; padding-left: 12px; gap: 14px; font-size: 17px; }
.tsearch svg { width: 20px; height: 20px; color: #222; }
.tsearch input { padding-top: 2px; }
.tsearch input::placeholder { color: #333; }
.cell { width: 58px; height: 48px; position: relative; }
.apps { display: flex; gap: 2px; margin-left: 4px; }
.apps svg { width: 28px; height: 28px; }
.apps .app-edge, .apps .app-vscode { width: 30px; height: 30px; }
.apps .app-intellij { width: 24px; height: 24px; }
.running::after, .active::after { content: ""; position: absolute; bottom: 0; left: 5px; right: 5px; height: 2px; background: #0a6fd6; }
.active { background: #efefef; }
.active::after { left: 0; right: 0; }
.tray { margin-left: auto; display: flex; align-items: center; }
.tray > button { width: 29px; height: 48px; }
.clock { width: 82px; display: flex; flex-direction: column; align-items: center; line-height: 22px; }
.tray .notes { width: 52px; position: relative; padding-right: 2px; }
.notes b { position: absolute; left: 24px; top: 23px; width: 20px; height: 20px; border-radius: 50%; border: 1px solid #777; background: rgba(211, 211, 211, .85); line-height: 18px; font-weight: 600; }
.peek { width: 6px; border-left: 1px solid #aaa; margin-left: 7px; }
</style>
